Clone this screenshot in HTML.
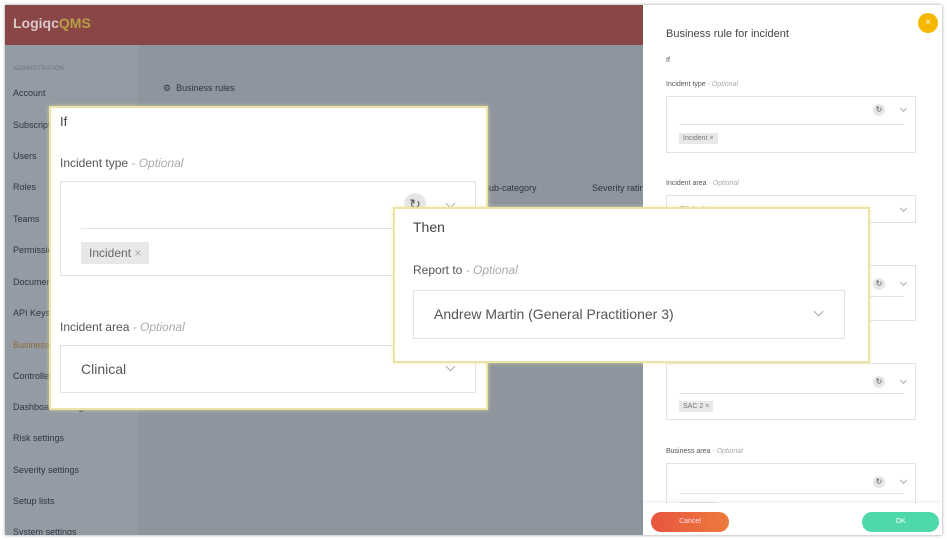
<!DOCTYPE html>
<html><head><meta charset="utf-8"><style>
*{box-sizing:border-box;margin:0;padding:0}
body{width:947px;height:540px;overflow:hidden;background:#fff;font-family:"Liberation Sans",sans-serif;position:relative}
.a{position:absolute}
.frame{left:5px;top:5px;width:937px;height:530px;overflow:hidden;background:#8e959f;box-shadow:0 0 3px #999}
.hdr{left:0;top:0;width:638px;height:40px;background:#8a4547}
.side{left:0;top:40px;width:133px;height:490px;background:#959ba4}
.si{left:8px;font-size:9px;color:#2f3540;white-space:nowrap}
.panel{left:638px;top:0;width:299px;height:530px;background:#fff}
.lbl{font-size:7px;color:#555}
.lbl i{color:#aaa}
.box{border:1px solid #e3e3e3;background:#fff}
.chip{background:#e8e8e8;color:#777;font-size:7px;padding:2px 4px}
.ref{width:12px;height:12px;border-radius:50%;background:#e6e6e6;font-size:8px;color:#555;text-align:center;line-height:12px}
.cv{position:absolute;width:5px;height:5px;border-right:1px solid #aaa;border-bottom:1px solid #aaa;transform:rotate(45deg)}
.cvb{width:7px;height:7px}
.card{background:#fff;border:2px solid #eee3a6;box-shadow:0 0 4px rgba(240,230,150,.7)}
</style></head><body>
<div class="a frame">
 <div class="a hdr"><div class="a" style="left:8px;top:10px;font-size:14px;font-weight:bold;color:#d9c9c6">Logiqc<span style="color:#b79e47">QMS</span></div></div>
 <div class="a side">
  <div class="a si" style="top:21px;font-size:6px;color:#6f7580">ADMINISTRATION</div>
  <div class="a si" style="top:43px">Account</div>
  <div class="a si" style="top:75px">Subscriptions</div>
  <div class="a si" style="top:106px">Users</div>
  <div class="a si" style="top:137px">Roles</div>
  <div class="a si" style="top:169px">Teams</div>
  <div class="a si" style="top:200px">Permissions</div>
  <div class="a si" style="top:232px">Documents</div>
  <div class="a si" style="top:263px">API Keys</div>
  <div class="a si" style="top:295px;color:#8c6b3c">Business rules</div>
  <div class="a si" style="top:326px">Controlled documents</div>
  <div class="a si" style="top:357px">Dashboard configuration</div>
  <div class="a si" style="top:388px">Risk settings</div>
  <div class="a si" style="top:420px">Severity settings</div>
  <div class="a si" style="top:451px">Setup lists</div>
  <div class="a si" style="top:482px">System settings</div>
 </div>
 <div class="a" style="left:158px;top:78px;font-size:9px;color:#2f3540">⚙&nbsp;&nbsp;Business rules</div>
 <div class="a" style="left:478px;top:178px;font-size:9px;color:#2f3540">Sub-category</div>
 <div class="a" style="left:587px;top:178px;font-size:9px;color:#2f3540">Severity rating</div>
 <div class="a panel">
  <div class="a" style="left:275px;top:8px;width:20px;height:20px;border-radius:50%;background:#f5b800;color:#fff;font-size:10px;text-align:center;line-height:20px">×</div>
  <div class="a" style="left:23px;top:23px;font-size:11px;color:#444">Business rule for incident</div>
  <div class="a lbl" style="left:23px;top:52px">If</div>
  <div class="a lbl" style="left:23px;top:76px">Incident type <i>- Optional</i></div>
  <div class="a box" style="left:23px;top:91px;width:250px;height:57px">
   <div class="a ref" style="left:206px;top:7px">↻</div><div class="cv" style="left:234px;top:9px"></div>
   <div class="a" style="left:12px;top:27px;width:225px;border-top:1px solid #e3e3e3"></div>
   <div class="a chip" style="left:12px;top:36px">Incident ×</div>
  </div>
  <div class="a lbl" style="left:23px;top:175px">Incident area <i>- Optional</i></div>
  <div class="a box" style="left:23px;top:190px;width:250px;height:28px"><div class="a" style="left:12px;top:9px;font-size:8px;color:#777">Clinical</div><div class="cv" style="left:234px;top:10px"></div></div>
  <div class="a box" style="left:23px;top:260px;width:250px;height:56px"><div class="a ref" style="left:206px;top:12px">↻</div><div class="cv" style="left:234px;top:14px"></div><div class="a" style="left:12px;top:30px;width:225px;border-top:1px solid #e3e3e3"></div></div>
  <div class="a box" style="left:23px;top:358px;width:250px;height:57px">
   <div class="a ref" style="left:206px;top:12px">↻</div><div class="cv" style="left:234px;top:14px"></div>
   <div class="a" style="left:12px;top:29px;width:225px;border-top:1px solid #e3e3e3"></div>
   <div class="a chip" style="left:12px;top:37px">SAC 2 ×</div>
  </div>
  <div class="a lbl" style="left:23px;top:443px">Business area <i>- Optional</i></div>
  <div class="a box" style="left:23px;top:458px;width:250px;height:50px"><div class="a ref" style="left:206px;top:12px">↻</div><div class="cv" style="left:234px;top:14px"></div><div class="a" style="left:12px;top:29px;width:225px;border-top:1px solid #e3e3e3"></div><div class="a" style="left:12px;top:38px;width:38px;height:6px;background:#e4e4e4"></div></div>
  <div class="a" style="left:0;top:498px;width:299px;height:32px;background:#fff;box-shadow:0 -2px 4px rgba(0,0,0,.06)"></div>
  <div class="a" style="left:8px;top:507px;width:78px;height:20px;border-radius:10px;background:linear-gradient(90deg,#e8553e,#ec7a3d);color:#fde;font-size:7px;text-align:center;line-height:20px">Cancel</div>
  <div class="a" style="left:219px;top:507px;width:77px;height:20px;border-radius:10px;background:#4fd8ab;color:#fff;font-size:7px;text-align:center;line-height:20px">OK</div>
 </div>
</div>
<div class="a card" style="left:49px;top:106px;width:439px;height:304px">
 <div class="a" style="left:9px;top:6px;font-size:13px;color:#444">If</div>
 <div class="a" style="left:9px;top:48px;font-size:12px;color:#555">Incident type <i style="color:#aaa">- Optional</i></div>
 <div class="a box" style="left:9px;top:73px;width:416px;height:95px">
  <div class="a" style="left:20px;top:46px;width:340px;border-top:1px solid #e3e3e3"></div>
  <div class="a" style="left:343px;top:11px;width:22px;height:22px;border-radius:50%;background:#e6e6e6;text-align:center;line-height:22px;font-size:14px;color:#555">↻</div>
  <div class="cv cvb" style="left:386px;top:18px"></div>
  <div class="a" style="left:20px;top:60px;background:#e8e8e8;color:#666;font-size:12px;padding:4px 8px">Incident <span style="color:#aaa">×</span></div>
 </div>
 <div class="a" style="left:9px;top:212px;font-size:12px;color:#555">Incident area <i style="color:#aaa">- Optional</i></div>
 <div class="a box" style="left:9px;top:237px;width:416px;height:48px">
  <div class="a" style="left:20px;top:15px;font-size:14px;color:#555">Clinical</div>
  <div class="cv cvb" style="left:386px;top:17px"></div>
 </div>
</div>
<div class="a card" style="left:393px;top:207px;width:477px;height:156px">
 <div class="a" style="left:18px;top:10px;font-size:14px;color:#444">Then</div>
 <div class="a" style="left:18px;top:54px;font-size:12px;color:#555">Report to <i style="color:#aaa">- Optional</i></div>
 <div class="a box" style="left:18px;top:81px;width:432px;height:49px">
  <div class="a" style="left:20px;top:15px;font-size:14px;color:#555">Andrew Martin (General Practitioner 3)</div>
  <div class="cv cvb" style="left:401px;top:17px"></div>
 </div>
</div>
</body></html>
